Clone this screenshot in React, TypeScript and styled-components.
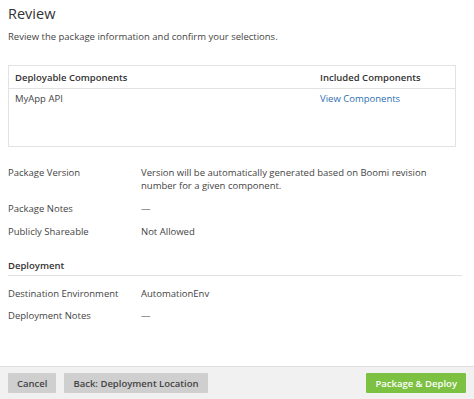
import styled, { createGlobalStyle } from 'styled-components';

const GlobalStyle = createGlobalStyle`
  html, body {
    margin: 0;
    padding: 0;
    background: #fff;
  }
  body {
    font-family: "Open Sans", "Liberation Sans", sans-serif;
    color: #444;
    font-size: 9.5px;
  }
`;

const Page = styled.div`
  width: 474px;
  height: 399px;
  display: flex;
  flex-direction: column;
  background: #fff;
`;

const Body = styled.div`
  flex: 1;
  padding: 5px 8px 0 8px;
`;

const Title = styled.h1`
  margin: 0;
  font-size: 14.5px;
  font-weight: 400;
  color: #333;
  line-height: 18px;
`;

const Subtitle = styled.p`
  margin: 7px 0 0 0;
  line-height: 13px;
  color: #444;
`;

const Table = styled.div`
  margin-top: 22px;
  width: 448px;
  height: 82px;
  border: 1px solid #e2e2e2;
  box-sizing: border-box;
`;

const TableRow = styled.div<{ $head?: boolean }>`
  display: grid;
  grid-template-columns: 305px 1fr;
  padding: 0 6px;
  height: ${(p) => (p.$head ? '22px' : '18px')};
  align-items: center;
  border-bottom: ${(p) => (p.$head ? '1px solid #e2e2e2' : 'none')};
  font-weight: ${(p) => (p.$head ? 600 : 400)};
  color: ${(p) => (p.$head ? '#333' : '#444')};
`;

const Link = styled.a`
  color: #2f6fb3;
  text-decoration: none;
`;

const Details = styled.div<{ $top: number; $gap: number }>`
  margin-top: ${(p) => p.$top}px;
  display: grid;
  grid-template-columns: 133px 300px;
  row-gap: ${(p) => p.$gap}px;
  line-height: 13px;
`;

const Label = styled.div`
  color: #444;
`;

const Value = styled.div`
  color: #444;
`;

const Section = styled.div`
  margin-top: 21px;
  padding-bottom: 3px;
  border-bottom: 1px solid #e2e2e2;
  font-weight: 600;
  color: #333;
  line-height: 13px;
  width: 454px;
`;

const Footer = styled.div`
  height: 32px;
  background: #f1f1f1;
  border-top: 1px solid #e0e0e0;
  display: flex;
  align-items: center;
  gap: 8px;
  padding: 0 8px;
`;

const Button = styled.button<{ $primary?: boolean }>`
  font-family: "Open Sans", "Liberation Sans", sans-serif;
  font-size: 9.5px;
  font-weight: 600;
  height: 20px;
  padding: 0 9px;
  border: none;
  border-radius: 1px;
  background: ${(p) => (p.$primary ? '#7cc142' : '#cfcfcf')};
  color: ${(p) => (p.$primary ? '#fff' : '#444')};
  margin-left: ${(p) => (p.$primary ? 'auto' : '0')};
`;

const App = () => {
  const rows: [string, string][] = [
    ['Package Version', 'Version will be automatically generated based on Boomi revision number for a given component.'],
    ['Package Notes', '—'],
    ['Publicly Shareable', 'Not Allowed'],
  ];
  const deployRows: [string, string][] = [
    ['Destination Environment', 'AutomationEnv'],
    ['Deployment Notes', '—'],
  ];

  return (
    <Page>
      <GlobalStyle />
      <Body>
        <Title>Review</Title>
        <Subtitle>Review the package information and confirm your selections.</Subtitle>
        <Table>
          <TableRow $head>
            <span>Deployable Components</span>
            <span>Included Components</span>
          </TableRow>
          <TableRow>
            <span>MyApp API</span>
            <Link href="#">View Components</Link>
          </TableRow>
        </Table>
        <Details $top={19} $gap={10}>
          {rows.map(([l, v]) => [
            <Label key={l}>{l}</Label>,
            <Value key={l + 'v'}>{v}</Value>,
          ])}
        </Details>
        <Section>Deployment</Section>
        <Details $top={11} $gap={9}>
          {deployRows.map(([l, v]) => [
            <Label key={l}>{l}</Label>,
            <Value key={l + 'v'}>{v}</Value>,
          ])}
        </Details>
      </Body>
      <Footer>
        <Button>Cancel</Button>
        <Button>Back: Deployment Location</Button>
        <Button $primary>Package &amp; Deploy</Button>
      </Footer>
    </Page>
  );
};

export default App;
